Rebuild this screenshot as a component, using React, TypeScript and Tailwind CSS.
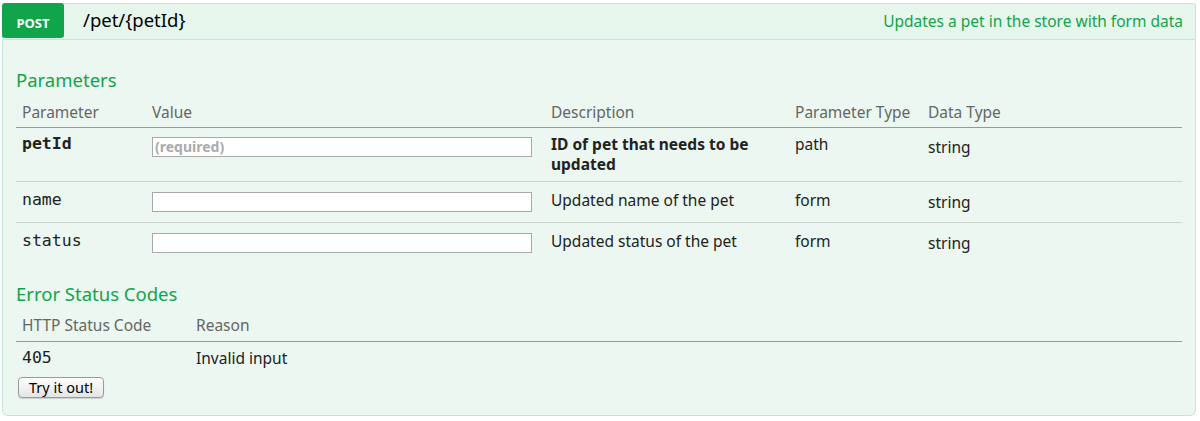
import React from 'react';

const params = [
  { name: 'petId', required: true, desc: 'ID of pet that needs to be updated', type: 'path', dataType: 'string' },
  { name: 'name', required: false, desc: 'Updated name of the pet', type: 'form', dataType: 'string' },
  { name: 'status', required: false, desc: 'Updated status of the pet', type: 'form', dataType: 'string' },
];

export default function App() {
  return (
    <div className="min-h-[421px] bg-white pl-[2px] pr-[4px] pt-[3px] font-['Noto_Sans',sans-serif] text-[#222]">
      {/* heading */}
      <div className="flex h-[37px] items-start justify-between rounded-t-[3px] border border-[#c3e8d1] bg-[#e7f6ec]">
        <div className="flex h-full items-center">
          <a className="-ml-px -mt-px flex h-[35px] w-[62px] items-center justify-center self-start rounded-[3px] bg-[#10a54a] pt-[6px] text-[13px] font-bold text-white">
            POST
          </a>
          <span className="mb-[4px] ml-[19px] text-[18.5px] text-black">/pet/{'{petId}'}</span>
        </div>
        <div className="mb-[4px] flex h-full items-center pr-[12px] text-[15.5px] text-[#10a54a]">
          Updates a pet in the store with form data
        </div>
      </div>

      {/* content */}
      <div className="rounded-b-[6px] border border-t-0 border-[#c3e8d1] bg-[#ebf7f0] px-[13px] pb-[16px] pt-[28px]">
        <h4 className="text-[18.5px] leading-[24px] text-[#10a54a]">Parameters</h4>
        <table className="w-full border-collapse text-[15.5px]">
          <colgroup>
            <col className="w-[130px]" />
            <col className="w-[399px]" />
            <col className="w-[244px]" />
            <col className="w-[133px]" />
            <col />
          </colgroup>
          <thead>
            <tr className="border-b border-[#999] text-left text-[#666]">
              <th className="px-[6px] pb-[5px] pt-[10px] font-normal leading-[20px]">Parameter</th>
              <th className="px-[6px] pb-[5px] pt-[10px] font-normal leading-[20px]">Value</th>
              <th className="px-[6px] pb-[5px] pt-[10px] font-normal leading-[20px]">Description</th>
              <th className="px-[6px] pb-[5px] pt-[10px] font-normal leading-[20px]">Parameter Type</th>
              <th className="px-[6px] pb-[5px] pt-[10px] font-normal leading-[20px]">Data Type</th>
            </tr>
          </thead>
          <tbody>
            {params.map((p, i) => (
              <tr
                key={p.name}
                className={
                  'align-top leading-[20px] ' +
                  (i < params.length - 1 ? 'border-b border-[#ccd6cf] ' : '') +
                  (i === 0 ? 'h-[54px]' : 'h-[41px]')
                }
              >
                <td
                  className={
                    "px-[6px] font-['DejaVu_Sans_Mono',monospace] text-[16.5px] " +
                    (p.required ? 'pt-[6px] font-bold' : 'pt-[8px]')
                  }
                >
                  {p.name}
                </td>
                <td className={'px-[6px] ' + (p.required ? 'pt-[9px]' : 'pt-[10px]')}>
                  <input
                    type="text"
                    placeholder={p.required ? '(required)' : ''}
                    className="block h-[20px] w-[380px] border border-[#a9a9a9] bg-white px-[2px] text-[14px] font-bold placeholder:text-[#aaa]"
                  />
                </td>
                <td className={'px-[6px] ' + (p.required ? 'pt-[6px] font-bold' : 'pt-[8px]')}>{p.desc}</td>
                <td className={'px-[6px] ' + (p.required ? 'pt-[6px]' : 'pt-[8px]')}>{p.type}</td>
                <td className={'px-[6px] ' + (p.required ? 'pt-[9px]' : 'pt-[10px]')}>{p.dataType}</td>
              </tr>
            ))}
          </tbody>
        </table>

        <h4 className="mt-[18px] text-[18.5px] leading-[24px] text-[#10a54a]">Error Status Codes</h4>
        <table className="w-full border-collapse text-[15.5px]">
          <colgroup>
            <col className="w-[174px]" />
            <col />
          </colgroup>
          <thead>
            <tr className="border-b border-[#999] text-left text-[#666]">
              <th className="px-[6px] pb-[6px] pt-[9px] font-normal leading-[20px]">HTTP Status Code</th>
              <th className="px-[6px] pb-[6px] pt-[9px] font-normal leading-[20px]">Reason</th>
            </tr>
          </thead>
          <tbody>
            <tr className="leading-[20px]">
              <td className="px-[6px] pt-[6px] font-['DejaVu_Sans_Mono',monospace] text-[16.5px]">405</td>
              <td className="px-[6px] pt-[6px]">Invalid input</td>
            </tr>
          </tbody>
        </table>

        <button
          type="button"
          className="ml-[2px] mt-[9px] h-[21px] rounded-[4px] border border-[#9a9a9a] bg-gradient-to-b from-white to-[#e4e4e4] px-[10px] text-[14.5px] leading-[18px] text-black shadow-[0_1px_1px_rgba(0,0,0,0.15)]"
        >
          Try it out!
        </button>
      </div>
    </div>
  );
}
